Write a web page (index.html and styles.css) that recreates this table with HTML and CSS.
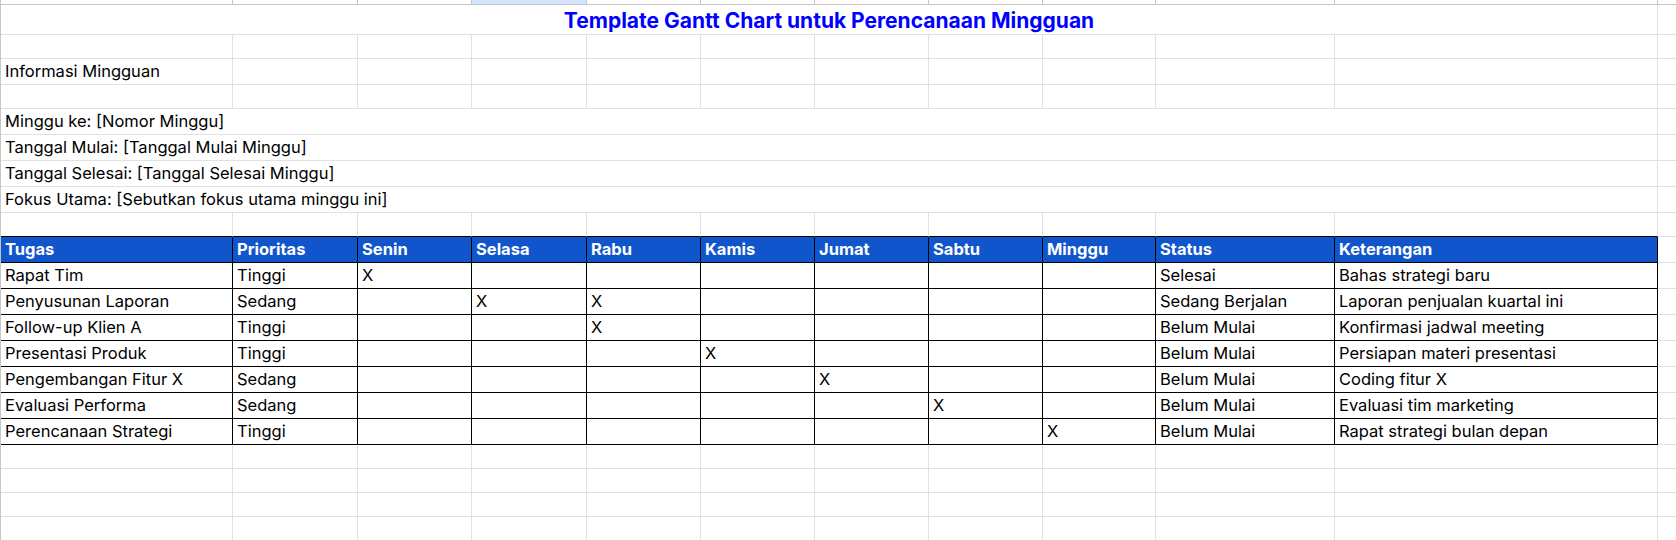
FILE: index.html
```html
<!DOCTYPE html>
<html lang="id">
<head>
<meta charset="utf-8">
<title>Template Gantt Chart untuk Perencanaan Mingguan</title>
<link rel="stylesheet" href="styles.css">
</head>
<body>
<div class="sheet">
  <div class="row strip">
    <div class="c"></div><div class="c"></div><div class="c"></div><div class="c sel"></div><div class="c"></div><div class="c"></div><div class="c"></div><div class="c"></div><div class="c"></div><div class="c"></div><div class="c"></div><div class="c last"></div>
  </div>
  <div class="row h30">
    <div class="c merged title">Template Gantt Chart untuk Perencanaan Mingguan</div><div class="c last"></div>
  </div>
  <div class="row h24">
    <div class="c"></div><div class="c"></div><div class="c"></div><div class="c"></div><div class="c"></div><div class="c"></div><div class="c"></div><div class="c"></div><div class="c"></div><div class="c"></div><div class="c"></div><div class="c last"></div>
  </div>
  <div class="row h26">
    <div class="c">Informasi Mingguan</div><div class="c"></div><div class="c"></div><div class="c"></div><div class="c"></div><div class="c"></div><div class="c"></div><div class="c"></div><div class="c"></div><div class="c"></div><div class="c"></div><div class="c last"></div>
  </div>
  <div class="row h24">
    <div class="c"></div><div class="c"></div><div class="c"></div><div class="c"></div><div class="c"></div><div class="c"></div><div class="c"></div><div class="c"></div><div class="c"></div><div class="c"></div><div class="c"></div><div class="c last"></div>
  </div>
  <div class="row h26"><div class="c merged">Minggu ke: [Nomor Minggu]</div><div class="c last"></div></div>
  <div class="row h26"><div class="c merged">Tanggal Mulai: [Tanggal Mulai Minggu]</div><div class="c last"></div></div>
  <div class="row h26"><div class="c merged">Tanggal Selesai: [Tanggal Selesai Minggu]</div><div class="c last"></div></div>
  <div class="row h26"><div class="c merged">Fokus Utama: [Sebutkan fokus utama minggu ini]</div><div class="c last"></div></div>
  <div class="row h24 above">
    <div class="c"></div><div class="c"></div><div class="c"></div><div class="c"></div><div class="c"></div><div class="c"></div><div class="c"></div><div class="c"></div><div class="c"></div><div class="c"></div><div class="c"></div><div class="c last"></div>
  </div>
  <div class="row h26 thead">
    <div class="c">Tugas</div><div class="c">Prioritas</div><div class="c">Senin</div><div class="c">Selasa</div><div class="c">Rabu</div><div class="c">Kamis</div><div class="c">Jumat</div><div class="c">Sabtu</div><div class="c">Minggu</div><div class="c">Status</div><div class="c">Keterangan</div><div class="c last"></div>
  </div>
  <div class="row h26 tbody">
    <div class="c">Rapat Tim</div><div class="c">Tinggi</div><div class="c">X</div><div class="c"></div><div class="c"></div><div class="c"></div><div class="c"></div><div class="c"></div><div class="c"></div><div class="c">Selesai</div><div class="c">Bahas strategi baru</div><div class="c last"></div>
  </div>
  <div class="row h26 tbody">
    <div class="c">Penyusunan Laporan</div><div class="c">Sedang</div><div class="c"></div><div class="c">X</div><div class="c">X</div><div class="c"></div><div class="c"></div><div class="c"></div><div class="c"></div><div class="c">Sedang Berjalan</div><div class="c">Laporan penjualan kuartal ini</div><div class="c last"></div>
  </div>
  <div class="row h26 tbody">
    <div class="c">Follow-up Klien A</div><div class="c">Tinggi</div><div class="c"></div><div class="c"></div><div class="c">X</div><div class="c"></div><div class="c"></div><div class="c"></div><div class="c"></div><div class="c">Belum Mulai</div><div class="c">Konfirmasi jadwal meeting</div><div class="c last"></div>
  </div>
  <div class="row h26 tbody">
    <div class="c">Presentasi Produk</div><div class="c">Tinggi</div><div class="c"></div><div class="c"></div><div class="c"></div><div class="c">X</div><div class="c"></div><div class="c"></div><div class="c"></div><div class="c">Belum Mulai</div><div class="c">Persiapan materi presentasi</div><div class="c last"></div>
  </div>
  <div class="row h26 tbody">
    <div class="c">Pengembangan Fitur X</div><div class="c">Sedang</div><div class="c"></div><div class="c"></div><div class="c"></div><div class="c"></div><div class="c">X</div><div class="c"></div><div class="c"></div><div class="c">Belum Mulai</div><div class="c">Coding fitur X</div><div class="c last"></div>
  </div>
  <div class="row h26 tbody">
    <div class="c">Evaluasi Performa</div><div class="c">Sedang</div><div class="c"></div><div class="c"></div><div class="c"></div><div class="c"></div><div class="c"></div><div class="c">X</div><div class="c"></div><div class="c">Belum Mulai</div><div class="c">Evaluasi tim marketing</div><div class="c last"></div>
  </div>
  <div class="row h26 tbody">
    <div class="c">Perencanaan Strategi</div><div class="c">Tinggi</div><div class="c"></div><div class="c"></div><div class="c"></div><div class="c"></div><div class="c"></div><div class="c"></div><div class="c">X</div><div class="c">Belum Mulai</div><div class="c">Rapat strategi bulan depan</div><div class="c last"></div>
  </div>
  <div class="row h24">
    <div class="c"></div><div class="c"></div><div class="c"></div><div class="c"></div><div class="c"></div><div class="c"></div><div class="c"></div><div class="c"></div><div class="c"></div><div class="c"></div><div class="c"></div><div class="c last"></div>
  </div>
  <div class="row h24">
    <div class="c"></div><div class="c"></div><div class="c"></div><div class="c"></div><div class="c"></div><div class="c"></div><div class="c"></div><div class="c"></div><div class="c"></div><div class="c"></div><div class="c"></div><div class="c last"></div>
  </div>
  <div class="row h24">
    <div class="c"></div><div class="c"></div><div class="c"></div><div class="c"></div><div class="c"></div><div class="c"></div><div class="c"></div><div class="c"></div><div class="c"></div><div class="c"></div><div class="c"></div><div class="c last"></div>
  </div>
  <div class="row h24">
    <div class="c"></div><div class="c"></div><div class="c"></div><div class="c"></div><div class="c"></div><div class="c"></div><div class="c"></div><div class="c"></div><div class="c"></div><div class="c"></div><div class="c"></div><div class="c last"></div>
  </div>
</div>
</body>
</html>
```

FILE: styles.css
```css
html, body {
  margin: 0;
  padding: 0;
  background: #ffffff;
}

body {
  font-family: Inter, "Noto Sans", "Liberation Sans", sans-serif;
  font-size: 16.5px;
  color: #000000;
  overflow: hidden;
}

.sheet {
  width: 1676px;
  height: 540px;
  overflow: hidden;
  border-left: 1px solid #c4c7c5;
  box-sizing: border-box;
}

.row {
  display: grid;
  grid-template-columns: 232px 125px 114px 115px 114px 114px 114px 114px 113px 179px 323px 1fr;
}

.c {
  box-sizing: border-box;
  border-right: 1px solid #e1e1e1;
  border-bottom: 1px solid #e1e1e1;
  padding: 0 4px 3px 4px;
  display: flex;
  align-items: flex-end;
  white-space: nowrap;
  line-height: 19px;
  min-width: 0;
}

.c.last {
  border-right: none;
}

.merged {
  grid-column: 1 / 12;
}

.strip {
  height: 5px;
}

.strip .c {
  border-right-color: #c4c7c5;
  border-bottom-color: #c4c7c5;
  padding: 0;
}

.strip .sel {
  background: #d3e3fd;
}

.h30 { height: 30px; }
.h24 { height: 24px; }
.h26 { height: 26px; }

.title {
  justify-content: center;
  color: #0000ff;
  font-weight: 700;
  font-size: 21px;
  line-height: 24px;
  padding-bottom: 1px;
}

.above .c:not(.last) {
  border-bottom-color: #000000;
}

.thead .c:not(.last) {
  background: #1155cc;
  color: #ffffff;
  font-weight: 700;
  border-right-color: #000000;
  border-bottom-color: #000000;
}

.tbody .c:not(.last) {
  border-right-color: #000000;
  border-bottom-color: #000000;
}

.thead .c:first-child,
.tbody .c:first-child {
  box-shadow: -1px 0 0 #000000;
}
```
